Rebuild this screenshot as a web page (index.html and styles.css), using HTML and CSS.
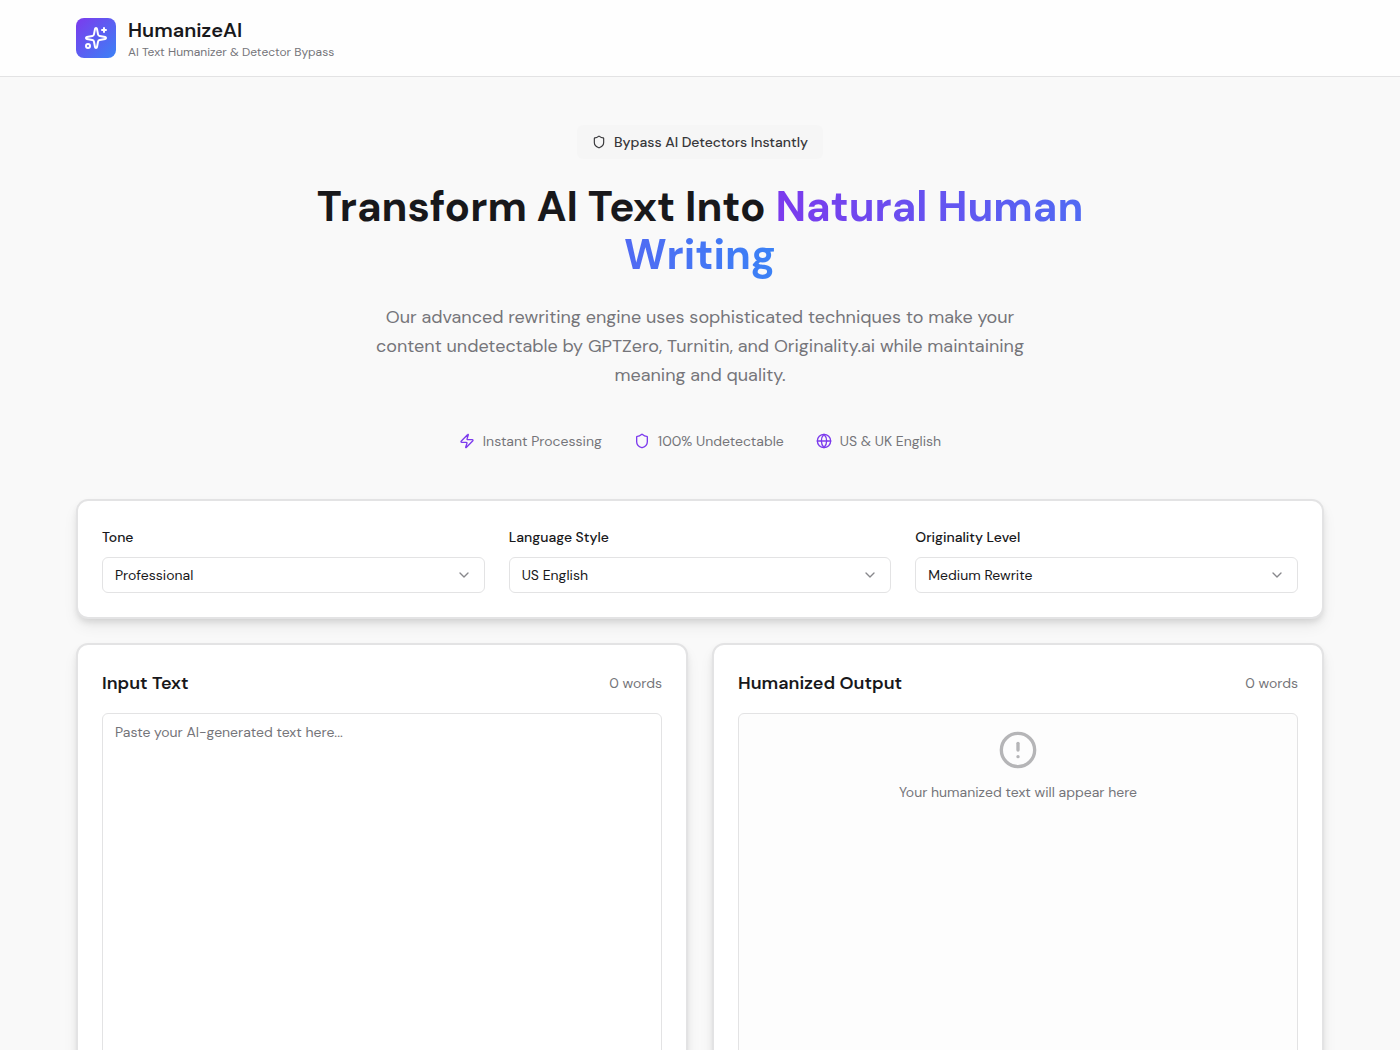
FILE: index.html
```html
<!DOCTYPE html>
<html lang="en">
<head>
<meta charset="utf-8">
<meta name="viewport" content="width=device-width, initial-scale=1">
<title>HumanizeAI</title>
<link rel="stylesheet" href="styles.css">
</head>
<body>
<header class="site-header">
  <div class="container brand">
    <div class="brand-mark">
      <svg class="icon icon-lg" viewBox="0 0 24 24" aria-hidden="true"><path d="M11.017 2.814a1 1 0 0 1 1.966 0l1.051 5.558a2 2 0 0 0 1.594 1.594l5.558 1.051a1 1 0 0 1 0 1.966l-5.558 1.051a2 2 0 0 0-1.594 1.594l-1.051 5.558a1 1 0 0 1-1.966 0l-1.051-5.558a2 2 0 0 0-1.594-1.594l-5.558-1.051a1 1 0 0 1 0-1.966l5.558-1.051a2 2 0 0 0 1.594-1.594z"/><path d="M20 2v4"/><path d="M22 4h-4"/><circle cx="4" cy="20" r="2"/></svg>
    </div>
    <div>
      <div class="brand-name">HumanizeAI</div>
      <p class="brand-tagline">AI Text Humanizer &amp; Detector Bypass</p>
    </div>
  </div>
</header>
<main class="container main">
  <section class="hero">
    <div class="badge">
      <svg class="icon icon-sm" viewBox="0 0 24 24" aria-hidden="true"><path d="M20 13c0 5-3.500 7.500-7.660 8.950a1 1 0 0 1-.67-.01C7.500 20.500 4 18 4 13V6a1 1 0 0 1 1-1c2 0 4.500-1.200 6.240-2.720a1.170 1.170 0 0 1 1.520 0C14.510 3.810 17 5 19 5a1 1 0 0 1 1 1z"/></svg>
      <span>Bypass AI Detectors Instantly</span>
    </div>
    <h1 class="hero-title">Transform AI Text Into <span class="gradient-text">Natural Human Writing</span></h1>
    <p class="hero-copy">Our advanced rewriting engine uses sophisticated techniques to make your content undetectable by GPTZero, Turnitin, and Originality.ai while maintaining meaning and quality.</p>
    <ul class="features">
      <li class="feature"><svg class="icon" viewBox="0 0 24 24" aria-hidden="true"><path d="M4 14a1 1 0 0 1-.78-1.630l9.900-10.200a.5.5 0 0 1 .86.460l-1.920 6.020A1 1 0 0 0 13 10h7a1 1 0 0 1 .78 1.630l-9.900 10.200a.5.5 0 0 1-.86-.46l1.920-6.020A1 1 0 0 0 11 14z"/></svg>Instant Processing</li>
      <li class="feature"><svg class="icon" viewBox="0 0 24 24" aria-hidden="true"><path d="M20 13c0 5-3.500 7.500-7.660 8.950a1 1 0 0 1-.67-.01C7.500 20.500 4 18 4 13V6a1 1 0 0 1 1-1c2 0 4.500-1.200 6.240-2.720a1.170 1.170 0 0 1 1.520 0C14.510 3.810 17 5 19 5a1 1 0 0 1 1 1z"/></svg>100% Undetectable</li>
      <li class="feature"><svg class="icon" viewBox="0 0 24 24" aria-hidden="true"><circle cx="12" cy="12" r="10"/><path d="M12 2a14.500 14.500 0 0 0 0 20 14.500 14.500 0 0 0 0-20"/><path d="M2 12h20"/></svg>US &amp; UK English</li>
    </ul>
  </section>
  <section class="card options">
    <div class="field">
      <label for="tone">Tone</label>
      <div class="select">
        <select id="tone"><option>Professional</option><option>Casual</option><option>Academic</option></select>
        <svg class="icon chevron" viewBox="0 0 24 24" aria-hidden="true"><path d="m6 9 6 6 6-6"/></svg>
      </div>
    </div>
    <div class="field">
      <label for="language">Language Style</label>
      <div class="select">
        <select id="language"><option>US English</option><option>UK English</option></select>
        <svg class="icon chevron" viewBox="0 0 24 24" aria-hidden="true"><path d="m6 9 6 6 6-6"/></svg>
      </div>
    </div>
    <div class="field">
      <label for="level">Originality Level</label>
      <div class="select">
        <select id="level"><option>Medium Rewrite</option><option>Light Rewrite</option><option>Heavy Rewrite</option></select>
        <svg class="icon chevron" viewBox="0 0 24 24" aria-hidden="true"><path d="m6 9 6 6 6-6"/></svg>
      </div>
    </div>
  </section>
  <div class="editors">
    <section class="card">
      <div class="card-head">
        <h2><label for="source">Input Text</label></h2>
        <span class="count">0 words</span>
      </div>
      <textarea id="source" class="box" placeholder="Paste your AI-generated text here..."></textarea>
    </section>
    <section class="card">
      <div class="card-head">
        <h2>Humanized Output</h2>
        <span class="count">0 words</span>
      </div>
      <div class="box output">
        <svg class="icon icon-xl" viewBox="0 0 24 24" aria-hidden="true"><circle cx="12" cy="12" r="10"/><path d="M12 8v4"/><path d="M12 16h.01"/></svg>
        <p>Your humanized text will appear here</p>
      </div>
    </section>
  </div>
</main>
</body>
</html>
```
FILE: styles.css
```css
:root {
  --ink: #18181b;
  --muted: #75757a;
  --line: #e3e3e4;
  --violet: #7c3aed;
  --blue: #3b82f6;
}

* {
  box-sizing: border-box;
}

body,
h1,
h2,
p,
ul {
  margin: 0;
  padding: 0;
}

html {
  scrollbar-width: none;
}

body {
  background: #f9f9f9;
  color: var(--ink);
  font-family: "DM Sans", Inter, sans-serif;
  font-size: 14px;
  line-height: 20px;
}

.container {
  max-width: 1280px;
  margin: 0 auto;
  padding: 0 16px;
}

.icon {
  width: 16px;
  height: 16px;
  flex: none;
  fill: none;
  stroke: currentColor;
  stroke-width: 2;
  stroke-linecap: round;
  stroke-linejoin: round;
}

.icon-sm {
  width: 14px;
  height: 14px;
}

.icon-lg {
  width: 24px;
  height: 24px;
}

.icon-xl {
  width: 40px;
  height: 40px;
}

.site-header {
  padding: 16px 0;
  background: #fefefe;
  border-bottom: 1px solid var(--line);
}

.brand {
  display: flex;
  align-items: center;
  gap: 12px;
}

.brand-mark {
  display: grid;
  place-items: center;
  width: 40px;
  height: 40px;
  border-radius: 8px;
  background: linear-gradient(135deg, var(--violet), var(--blue));
  color: #fff;
}

.brand-name {
  font-size: 20px;
  font-weight: 600;
  line-height: 28px;
}

.brand-tagline {
  font-size: 12px;
  line-height: 16px;
  color: var(--muted);
}

.main {
  padding-top: 48px;
  padding-bottom: 48px;
}

.hero {
  display: flex;
  flex-direction: column;
  align-items: center;
  text-align: center;
}

.badge {
  display: flex;
  align-items: center;
  gap: 8px;
  padding: 7px 15px;
  border-radius: 6px;
  background: #f6f6f6;
  color: #38383b;
  font-weight: 500;
}

.hero-title {
  max-width: 896px;
  margin-top: 24px;
  font-size: 42px;
  font-weight: 700;
  line-height: 48px;
}

.gradient-text {
  background: linear-gradient(90deg, var(--violet), var(--blue));
  background-clip: text;
  -webkit-background-clip: text;
  color: transparent;
}

.hero-copy {
  max-width: 672px;
  margin-top: 24px;
  font-size: 18px;
  line-height: 29px;
  color: var(--muted);
}

.features {
  display: flex;
  flex-wrap: wrap;
  justify-content: center;
  gap: 32px;
  margin: 41px 0 48px;
  list-style: none;
  color: var(--muted);
}

.feature {
  display: flex;
  align-items: center;
  gap: 8px;
}

.feature .icon {
  color: var(--violet);
}

.card {
  padding: 24px;
  border: 2px solid var(--line);
  border-radius: 12px;
  background: #fff;
  box-shadow: 0 4px 6px -1px rgb(0 0 0 / 10%), 0 8px 16px -2px rgb(0 0 0 / 8%);
}

.options {
  display: grid;
  grid-template-columns: repeat(3, 1fr);
  gap: 24px;
}

.field {
  display: grid;
  gap: 8px;
}

.field label {
  font-weight: 500;
  line-height: 24px;
}

.select {
  display: grid;
  align-items: center;
}

.select > * {
  grid-area: 1 / 1;
}

.select select {
  appearance: none;
  width: 100%;
  height: 36px;
  padding: 0 36px 0 12px;
  border: 1px solid var(--line);
  border-radius: 6px;
  background: #fff;
  color: inherit;
  font: inherit;
}

.chevron {
  justify-self: end;
  margin-right: 13px;
  color: #88888c;
  pointer-events: none;
}

.editors {
  display: grid;
  grid-template-columns: repeat(2, 1fr);
  gap: 24px;
  margin-top: 24px;
}

.card-head {
  display: flex;
  align-items: center;
  justify-content: space-between;
  margin-bottom: 16px;
}

.card-head h2 {
  font-size: 18px;
  font-weight: 600;
  line-height: 28px;
}

.count {
  color: var(--muted);
}

.box {
  display: block;
  width: 100%;
  min-height: 400px;
  border: 1px solid var(--line);
  border-radius: 6px;
}

textarea.box {
  padding: 8px 12px;
  background: #fff;
  color: inherit;
  font: inherit;
  resize: none;
}

textarea.box::placeholder {
  color: var(--muted);
}

.output {
  display: flex;
  flex-direction: column;
  align-items: center;
  gap: 12px;
  padding: 16px;
  background: #fdfdfd;
  color: var(--muted);
}

.output .icon {
  color: #b5b5b7;
}

@media (max-width: 768px) {
  .options,
  .editors {
    grid-template-columns: 1fr;
  }
}
```
